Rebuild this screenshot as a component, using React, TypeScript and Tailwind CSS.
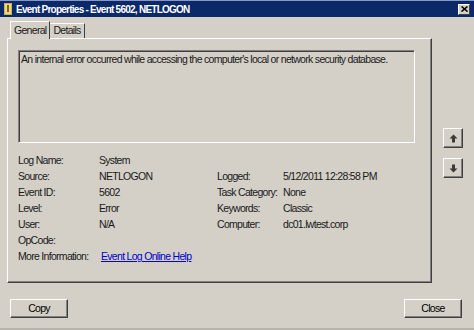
import React from "react";

const font = "font-['Liberation_Sans',Arial,sans-serif]";

function Row({ a, b, c, d }: { a: string; b?: React.ReactNode; c?: string; d?: string }) {
  return (
    <div className="flex h-4 items-center whitespace-nowrap">
      <span className="w-[81px]">{a}</span>
      <span className="w-[118px]">{b}</span>
      <span className="w-[66px]">{c}</span>
      <span>{d}</span>
    </div>
  );
}

function ArrowBtn({ up }: { up?: boolean }) {
  return (
    <div className="flex h-[20px] w-[20px] items-center justify-center border border-t-white border-l-white border-r-[#404040] border-b-[#404040] bg-[#d4d0c8] shadow-[inset_-1px_-1px_0_#808080]">
      <svg width="9" height="9" viewBox="0 0 9 9" className={up ? "" : "rotate-180"}>
        <path d="M4.5 0.5 L8.5 4.5 L6 4.5 L6 8.5 L3 8.5 L3 4.5 L0.5 4.5 Z" fill="#3a3a3a" />
      </svg>
    </div>
  );
}

function Btn({ label }: { label: string }) {
  return (
    <div className="flex h-[19px] w-[58px] items-center justify-center border border-t-white border-l-white border-r-[#404040] border-b-[#404040] bg-[#d4d0c8] text-black shadow-[inset_-1px_-1px_0_#808080]">
      {label}
    </div>
  );
}

export default function App() {
  return (
    <div className={`flex h-[330px] w-[474px] flex-col bg-[#d4d0c8] text-[10.5px] tracking-[-0.7px] text-[#1a1a1a] ${font}`}>
      <div className="flex h-[17px] items-center bg-[#0b2868] px-1 border-t border-[#8898c0]">
        <svg width="8" height="12" viewBox="0 0 8 12" className="mr-[4px]">
          <rect x="0" y="0" width="8" height="12" fill="#c8b060" />
          <rect x="1" y="1" width="6" height="10" fill="#f0d870" />
          <rect x="3" y="2" width="2" height="7" fill="#806030" />
        </svg>
        <span className="flex-1 text-[10px] font-bold tracking-[-0.75px] text-white">Event Properties - Event 5602, NETLOGON</span>
        <div className="flex h-[11px] w-[12px] items-center justify-center border border-t-white border-l-white border-r-[#404040] border-b-[#404040] bg-[#d4d0c8]">
          <svg width="7" height="6" viewBox="0 0 7 6">
            <path d="M0.5 0.5 L6.5 5.5 M6.5 0.5 L0.5 5.5" stroke="#000" strokeWidth="1.6" />
          </svg>
        </div>
      </div>

      <div className="flex flex-1 flex-col px-[7px] pt-[4px]">
        <div className="flex items-end pl-[3px]">
          <div className="relative z-10 -mb-px flex h-[18px] items-center border border-b-0 border-t-white border-l-white border-r-[#404040] bg-[#d4d0c8] px-[3px]">
            General
          </div>
          <div className="flex h-[15px] items-center border border-l-0 border-b-0 border-t-white border-r-[#404040] px-[3px]">
            Details
          </div>
        </div>
        <div className="flex">
          <div className="h-[245px] w-[425px] border border-t-white border-l-white border-r-[#404040] border-b-[#404040] px-[10px] pt-[11px] shadow-[inset_-1px_-1px_0_#808080]">
            <div className="h-[93px] w-[397px] border border-t-[#808080] border-l-[#808080] border-r-white border-b-white px-[2px] py-[1px] shadow-[inset_1px_1px_0_#404040]">
              An internal error occurred while accessing the computer's local or network security database.
            </div>
            <div className="pt-[10px]">
              <Row a="Log Name:" b="System" />
              <Row a="Source:" b="NETLOGON" c="Logged:" d="5/12/2011 12:28:58 PM" />
              <Row a="Event ID:" b="5602" c="Task Category:" d="None" />
              <Row a="Level:" b="Error" c="Keywords:" d="Classic" />
              <Row a="User:" b="N/A" c="Computer:" d="dc01.lwtest.corp" />
              <Row a="OpCode:" />
              <Row a="More Information:" b={<span className="ml-[2px] text-[#0000cc] underline">Event Log Online Help</span>} />
            </div>
          </div>
          <div className="flex flex-col pl-[11px] pt-[90px] gap-[10px]">
            <ArrowBtn up />
            <ArrowBtn />
          </div>
        </div>
        <div className="mt-[16px] flex justify-between pl-[3px] pr-[5px]">
          <Btn label="Copy" />
          <Btn label="Close" />
        </div>
      </div>
      <div className="h-[2px] bg-[#b8b4ac]" />
    </div>
  );
}
